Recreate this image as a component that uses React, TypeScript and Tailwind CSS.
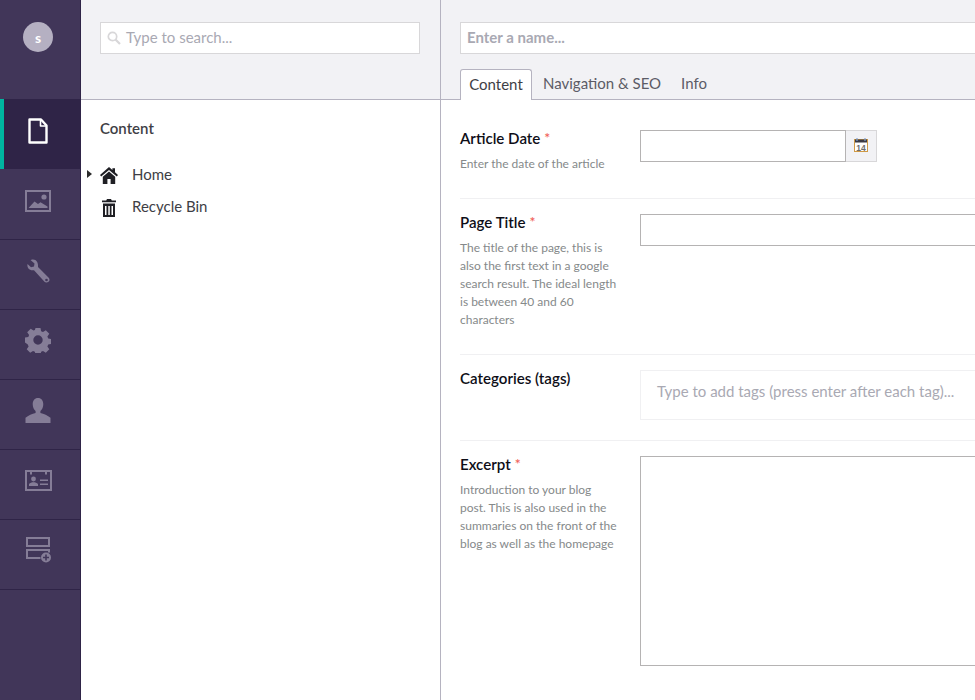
import React from "react";

const Star = () => <span className="text-[#f0625a] text-[14px] ml-[4px] relative top-[-1px]">*</span>;

function NavItem({ children, active, pb = "pb-[9px]" }: { children: React.ReactNode; active?: boolean; pb?: string }) {
  return (
    <div className={`h-[70px] flex items-center justify-center ${pb} ${active ? "bg-[#2f2447] border-l-4 border-l-[#00b5a0] mb-[1px] pr-[8px]" : "border-b border-[#2f2447] pr-[4px]"}`}>
      {children}
    </div>
  );
}

const C = "#857d97";

function Row({ label, required, help, children, hr = true, h }: { label: string; required?: boolean; help?: string; children: React.ReactNode; hr?: boolean; h: string }) {
  return (
    <div className={`flex ${h} ${hr ? "border-b border-[#f0f0f2]" : ""}`}>
      <div className="w-[180px] shrink-0 pr-[20px]">
        <div className="text-[15.1px] leading-[20px] text-[#0e0e17] mt-[-2px] font-semibold">
          {label}
          {required && <Star />}
        </div>
        {help && <div className="text-[12px] leading-[18px] text-[#85898a] mt-[6px]">{help}</div>}
      </div>
      <div className="flex-1">{children}</div>
    </div>
  );
}

export default function App() {
  return (
    <div className="flex w-[975px] h-[700px] overflow-hidden bg-white font-['Lato','Liberation_Sans',sans-serif]">
      <aside className="w-[81px] shrink-0 bg-[#413659] border-r border-[#2f2447]">
        <div className="h-[99px] flex justify-center pt-[22px] pr-[4px]">
          <div className="w-[30px] h-[30px] rounded-full bg-[#b5b0c2] text-white text-[14px] font-bold flex items-center justify-center">s</div>
        </div>
        <NavItem active pb="pb-[7px]">
          <svg width="20" height="26" viewBox="0 0 20 26" fill="none" stroke="#fff" strokeWidth="2.4" strokeLinejoin="round">
            <path d="M1.500 1.500h11.500l5.500 6v17H1.500z" />
            <path d="M12.500 1.500v6.500h6" strokeWidth="1.600" />
          </svg>
        </NavItem>
        <NavItem pb="pb-[7px]">
          <svg width="26" height="22" viewBox="0 0 26 22" fill={C}>
            <path fillRule="evenodd" d="M0 0h26v22H0zM2 2v18h22V2z" />
            <circle cx="19" cy="7" r="2.600" />
            <path d="M3.500 18 9.500 11.500 13 14l2.500-1.800L22.500 16.500V18z" />
          </svg>
        </NavItem>
        <NavItem pb="pb-[5px]">
          <svg width="26" height="26" viewBox="0 0 26 26" fill="none">
            <path d="M8 .5c-1.300 0-2 .3-2.500.6L9.500 4.500 9 7.500l-3 .8L2.500 5C1.800 8.700 4.500 12 9 11.200l10.500 11.500c1.500 1.600 5 .5 5-1.800 0-1.200-.6-1.900-1.300-2.600L13 8C13.500 4 11.500.5 8 .5z" fill={C} />
            <circle cx="21.500" cy="21" r="1.300" fill="#413659" />
          </svg>
        </NavItem>
        <NavItem>
          <svg width="26" height="26" viewBox="0 0 26 26" fill={C}>
            <path fillRule="evenodd" d="M10.500 1h5l.6 3.300 1.900.8 2.800-1.900 3.500 3.500-1.900 2.800.8 1.900 3.300.6v5l-3.300.6-.8 1.900 1.900 2.800-3.500 3.500-2.800-1.900-1.900.8-.6 3.300h-5l-.6-3.300-1.900-.8-2.800 1.900-3.500-3.500 1.900-2.800-.8-1.900L0 15.500v-5l3.300-.6.8-1.900L2.200 5.200l3.500-3.500 2.800 1.900 1.400-.6zM13 8.300a4.700 4.700 0 1 0 0 9.400 4.700 4.700 0 0 0 0-9.400z" />
          </svg>
        </NavItem>
        <NavItem>
          <svg width="26" height="25" viewBox="0 0 26 26" fill={C}>
            <path d="M13 0c3.500 0 5.500 2.800 5.500 6.500 0 3-1.200 5.500-3 7v2c3.500 1 7.700 2.500 10.500 5v5.500H0V20.500c2.800-2.500 7-4 10.500-5v-2c-1.800-1.500-3-4-3-7C7.500 2.800 9.500 0 13 0z" />
          </svg>
        </NavItem>
        <NavItem>
          <svg width="27" height="21" viewBox="0 0 27 21" fill={C}>
            <path fillRule="evenodd" d="M0 0h27v21H0zM2 2v17h23V2z" />
            <path d="M5 2h2v2.500H5zM20 2h2v2.500h-2z" />
            <circle cx="8.500" cy="9" r="2.400" />
            <path d="M4 16v-2c1-1.200 2.800-1.700 4.500-1.700s3.500.5 4.500 1.700v2zM15 9.500h8v1.600h-8zM15 13.500h8v1.600h-8z" />
          </svg>
        </NavItem>
        <NavItem>
          <svg width="27" height="26" viewBox="0 0 27 26" fill={C}>
            <path fillRule="evenodd" d="M1 0h24v10H1zM3 2v6h20V2z" />
            <path fillRule="evenodd" d="M1 12h24v3.500h-2V14H3v6h12.500v2H1z" />
            <path fillRule="evenodd" d="M21 15.500a5 5 0 1 0 0 10 5 5 0 0 0 0-10zm-.8 2h1.600v2.200H24v1.600h-2.200v2.200h-1.600v-2.200H18v-1.600h2.200z" />
          </svg>
        </NavItem>
      </aside>

      <section className="w-[360px] shrink-0 border-r border-[#b5b3c0] flex flex-col">
        <div className="h-[100px] shrink-0 bg-[#f2f2f5] border-b border-[#b5b3c0] pt-[22px] px-[19px]">
          <div className="h-[32px] w-[320px] bg-white border border-[#d8d7d9] flex items-center pl-[6px] pb-[2px]">
            <svg width="14" height="14" viewBox="0 0 14 14" fill="none" stroke="#d8d7d9" strokeWidth="1.700" className="relative top-[1px]">
              <circle cx="5.500" cy="5.500" r="4.200" />
              <path d="M8.500 8.500l4.500 4.500" strokeWidth="2.200" />
            </svg>
            <span className="ml-[5px] text-[15px] text-[#a9a9b3]">Type to search...</span>
          </div>
        </div>
        <div className="pl-[19px] pt-[19px] relative">
          <div className="text-[15px] leading-[18px] font-semibold text-[#3e3e45]">Content</div>
          <div className="mt-[21px] flex items-center h-[32px] relative">
            <span className="absolute left-[-13px] top-[12px] w-0 h-0 border-y-[4px] border-y-transparent border-l-[5px] border-l-[#2b2b2b]" />
            <svg width="18" height="17" viewBox="0 0 18 17" fill="#1f1f24" className="relative top-[1px]">
              <path d="M9 0 0 8l1.200 1.600L9 3l7.800 6.600L18 8l-3-2.700V1.200h-2.600v1.900z" />
              <path d="M9 4.500 2.800 9.800V17H7.400v-5h3.200v5h4.600V9.800z" />
            </svg>
            <span className="ml-[14px] text-[15px] text-[#3e3e45]">Home</span>
          </div>
          <div className="flex items-center h-[32px]">
            <div className="w-[18px] flex justify-center">
              <svg width="14" height="18" viewBox="0 0 14 18" fill="#1f1f24" className="relative top-[2px]">
                <path d="M5 0h4l.8 1.500H14v1.700H0V1.500h4.200z" />
                <path fillRule="evenodd" d="M1 4.500h12V18H1zM3 7v9h1.500V7zm3.300 0v9h1.500V7zm3.200 0v9H11V7z" />
              </svg>
            </div>
            <span className="ml-[14px] text-[15px] text-[#3e3e45]">Recycle Bin</span>
          </div>
        </div>
      </section>

      <main className="w-[600px] shrink-0 flex flex-col">
        <div className="h-[100px] shrink-0 bg-[#f2f2f5] border-b border-[#b5b3c0] pl-[19px] pt-[22px] relative">
          <div className="h-[32px] bg-white border border-[#d8d7d9] flex items-center pl-[6px] pb-[2px] text-[15px] font-bold text-[#a9a9b3]">Enter a name...</div>
          <div className="flex mt-[15px] text-[15px] text-[#5c5c66]">
            <div className="h-[31px] w-[72px] bg-white border border-[#b5b3c0] border-b-0 rounded-t-[3px] flex items-center justify-center pb-[2px] text-[#3e3e45] relative z-10">Content</div>
            <div className="h-[31px] ml-[11px] flex items-center pb-[2px]">Navigation &amp; SEO</div>
            <div className="h-[31px] ml-[20px] flex items-center pb-[2px]">Info</div>
          </div>
        </div>
        <div className="pl-[19px] pt-[30px]">
          <Row label="Article Date" required help="Enter the date of the article" h="h-[69px]">
            <div className="flex">
              <div className="w-[206px] h-[32px] border border-[#b5b3b3]" />
              <div className="w-[31px] h-[32px] bg-[#f2f2f5] border border-[#d8d7d9] border-l-0 flex items-center justify-center pb-[3px] pr-[1px]">
                <svg width="14" height="14" viewBox="0 0 14 14">
                  <rect x="0.500" y="1.500" width="13" height="12" fill="#fff" stroke="#d09a45" />
                  <rect x="1" y="1.500" width="12" height="3" fill="#3a3a44" />
                  <path d="M3 0v3M11 0v3" stroke="#7f9fd0" strokeWidth="1.200" />
                  <text x="7" y="12.500" textAnchor="middle" fontSize="8.500" fontWeight="700" fill="#6d6d6d" fontFamily="Liberation Sans">14</text>
                </svg>
              </div>
            </div>
          </Row>
          <Row label="Page Title" required h="h-[156px] pt-[15px]" help="The title of the page, this is also the first text in a google search result. The ideal length is between 40 and 60 characters">
            <div className="h-[32px] w-[400px] border border-[#b5b3b3]" />
          </Row>
          <Row label="Categories (tags)" h="h-[86px] pt-[15px]">
            <div className="h-[50px] w-[400px] border border-[#f0f0f2] pl-[16px] pb-[7px] flex items-center text-[15px] text-[#a9a9b3] whitespace-nowrap overflow-hidden">Type to add tags (press enter after each tag)...</div>
          </Row>
          <Row label="Excerpt" required hr={false} h="h-[226px] pt-[15px]" help="Introduction to your blog post. This is also used in the summaries on the front of the blog as well as the homepage">
            <div className="h-[210px] w-[400px] border border-[#b5b3b3]" />
          </Row>
        </div>
      </main>
    </div>
  );
}
